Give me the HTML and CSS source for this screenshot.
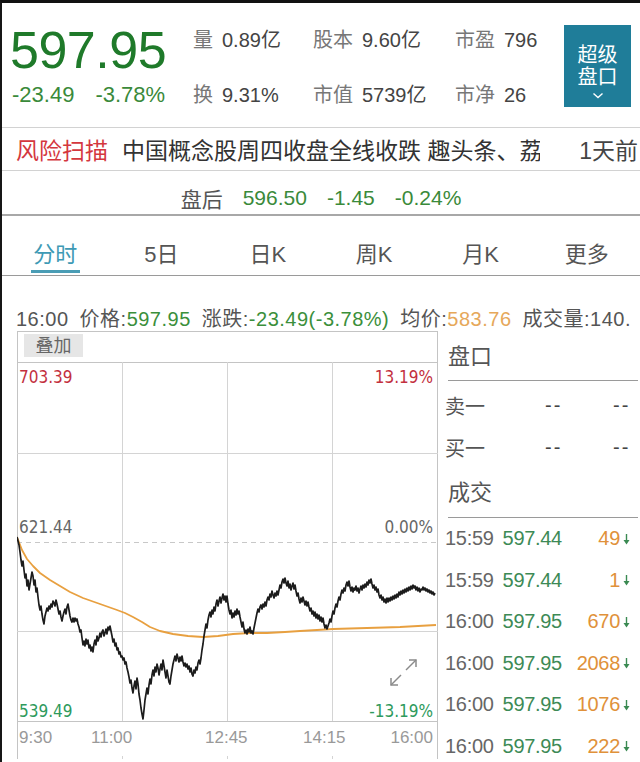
FILE: index.html
```html
<!DOCTYPE html>
<html lang="zh-CN">
<head>
<meta charset="utf-8">
<title>597.95</title>
<link rel="stylesheet" href="styles.css">
</head>
<body>
<div class="page">
  <header class="quote">
    <div class="price-block">
      <div class="price">597.95</div>
      <div class="chg"><span>-23.49</span><span>-3.78%</span></div>
    </div>
    <div class="stats">
      <div class="stat"><span class="k">量</span><span class="v">0.89亿</span></div>
      <div class="stat"><span class="k">股本</span><span class="v">9.60亿</span></div>
      <div class="stat"><span class="k">市盈</span><span class="v">796</span></div>
      <div class="stat"><span class="k">换</span><span class="v">9.31%</span></div>
      <div class="stat"><span class="k">市值</span><span class="v">5739亿</span></div>
      <div class="stat"><span class="k">市净</span><span class="v">26</span></div>
    </div>
    <div class="super">
      <span>超级</span>
      <span>盘口</span>
      <svg class="chev" width="12" height="7" viewBox="0 0 12 7"><polyline points="1.5,1.5 6,5.5 10.5,1.5" fill="none" stroke="#fff" stroke-width="1.4"/></svg>
    </div>
  </header>

  <div class="risk">
    <span class="tag">风险扫描</span>
    <span class="title">中国概念股周四收盘全线收跌 趣头条、荔枝</span>
    <span class="ago">1天前</span>
  </div>

  <div class="after">
    <span class="lbl">盘后</span>
    <span class="dn">596.50</span>
    <span class="dn">-1.45</span>
    <span class="dn">-0.24%</span>
  </div>

  <nav class="tabs">
    <div class="tab active">分时</div>
    <div class="tab">5日</div>
    <div class="tab">日K</div>
    <div class="tab">周K</div>
    <div class="tab">月K</div>
    <div class="tab">更多</div>
  </nav>

  <div class="info">
    <span class="grp">16:00</span><span class="grp">价格:<span class="dn">597.95</span></span><span class="grp">涨跌:<span class="dn">-23.49(-3.78%)</span></span><span class="grp">均价:<span class="avg">583.76</span></span><span class="grp last">成交量:140.</span>
  </div>

  <div class="main">
    <div class="chart">
      <svg width="421" height="428" viewBox="17 331 421 428">
        <g class="frame" fill="none">
          <line x1="17.5" y1="331" x2="17.5" y2="762"/>
          <line x1="437.5" y1="331" x2="437.5" y2="762"/>
          <line x1="17" y1="331.5" x2="438" y2="331.5"/>
          <line x1="17" y1="362.5" x2="438" y2="362.5"/>
          <line x1="17" y1="721.5" x2="438" y2="721.5"/>
        </g>
        <g class="grid" fill="none">
          <line x1="17" y1="453.5" x2="438" y2="453.5"/>
          <line x1="17" y1="631.5" x2="438" y2="631.5"/>
          <line x1="122.5" y1="362" x2="122.5" y2="721"/>
          <line x1="227.5" y1="362" x2="227.5" y2="721"/>
          <line x1="332.5" y1="362" x2="332.5" y2="721"/>
          <line x1="122.5" y1="756" x2="122.5" y2="762"/>
          <line x1="227.5" y1="756" x2="227.5" y2="762"/>
          <line x1="332.5" y1="756" x2="332.5" y2="762"/>
          <line class="dash" x1="17" y1="542.5" x2="438" y2="542.5"/>
        </g>
        <rect x="24" y="334" width="59" height="23" fill="#e6e6e6"/>
        <text class="overlay" x="53.5" y="352" text-anchor="middle">叠加</text>

        <polyline class="avgline" points="17,537 22,550 27,559 33,566 40,573 50,580 60,586 70,592 83,598 100,604 117,610 125,613 133,617 142,622 150,627 160,631 173,634 188,636 203,637 218,636 233,634 250,633 267,633 285,632 300,631 317,630 333,629 350,628.5 367,628 384,627.5 400,627 418,626 436,625"/>
        <polyline class="priceline" points="17,537 19,545 20,552 21,560 22,566 23,561 24,570 25,578 26,574 27,586 28,580 29,590 30,584 31,578 32,572 33,576 34,585 35,580 36,592 37,588 38,597 39,605 40,610 41,606 42,614 43,620 44,624 45,616 46,612 47,608 48,611 49,606 50,609 51,604 52,607 53,601 54,603 55,606 56,600 57,604 58,609 59,614 60,611 61,617 62,621 63,616 64,612 65,609 66,614 67,607 68,604 69,610 70,616 71,620 72,622 73,618 74,622 75,618 76,621 77,619 78,624 79,627 80,632 81,630 82,638 83,645 84,641 85,646 86,639 87,644 88,640 89,648 90,645 91,651 92,647 93,652 94,644 95,640 96,645 97,636 98,641 99,638 100,633 101,637 102,632 103,630 104,636 105,633 106,629 107,634 108,627 109,630 110,626 111,631 112,636 113,642 114,639 115,646 116,643 117,650 118,648 119,654 120,652 121,657 122,656 123,660 124,658 125,664 126,662 127,668 128,672 129,677 130,683 131,680 132,688 133,693 134,686 135,681 136,689 137,678 138,684 139,694 140,700 141,708 142,714 143,719 144,710 145,700 146,694 147,688 148,694 149,685 150,679 151,684 152,675 153,670 154,676 155,667 156,672 157,664 158,668 159,675 160,669 161,664 162,670 163,660 164,666 165,672 166,678 167,670 168,676 169,682 170,684 171,676 172,670 173,664 174,660 175,656 176,661 177,654 178,658 179,662 180,657 181,661 182,656 183,662 184,666 185,663 186,667 187,664 188,669 189,666 190,672 191,668 192,674 193,676 194,670 195,673 196,667 197,670 198,663 199,660 200,664 201,658 202,650 203,644 204,636 205,630 206,624 207,628 208,620 209,615 210,612 211,617 212,610 213,614 214,607 215,611 216,604 217,600 218,606 219,601 220,597 221,603 222,598 223,594 224,600 225,596 226,602 227,596 228,604 229,610 230,614 231,610 232,618 233,613 234,617 235,611 236,615 237,609 238,614 239,611 240,617 241,622 242,627 243,622 244,629 245,633 246,630 247,634 248,629 249,632 250,627 251,633 252,631 253,634 254,628 255,623 256,618 257,613 258,609 259,612 260,607 261,605 262,609 263,604 264,607 265,602 266,606 267,600 268,597 269,600 270,594 271,597 272,591 273,595 274,598 275,593 276,596 277,591 278,595 279,590 280,585 281,588 282,582 283,579 284,583 285,578 286,583 287,586 288,581 289,588 290,584 291,590 292,586 293,583 294,589 295,585 296,591 297,596 298,593 299,599 300,603 301,598 302,602 303,597 304,601 305,605 306,601 307,606 308,602 309,607 310,611 311,608 312,614 313,611 314,616 315,612 316,618 317,614 318,619 319,615 320,621 321,617 322,622 323,618 324,624 325,628 326,625 327,629 328,626 329,623 330,619 331,622 332,616 333,611 334,614 335,608 336,604 337,607 338,601 339,597 340,600 341,594 342,590 343,593 344,588 345,591 346,585 347,582 348,586 349,581 350,587 351,591 352,587 353,592 354,588 355,590 356,586 357,591 358,588 359,593 360,589 361,586 362,590 363,585 364,588 365,584 366,587 367,582 368,585 369,580 370,583 371,579 372,584 373,588 374,585 375,590 376,587 377,592 378,589 379,595 380,598 381,595 382,600 383,597 384,602 385,599 386,603 387,598 388,602 389,598 390,601 391,597 392,600 393,596 394,599 395,595 396,598 397,594 398,597 399,592 400,595 401,591 402,594 403,590 404,593 405,589 406,592 407,588 408,591 409,587 410,590 411,586 412,589 413,585 414,588 415,586 416,590 417,587 418,591 419,588 420,592 421,589 422,590 423,587 424,590 425,588 426,591 427,589 428,592 429,590 430,593 431,591 432,594 433,592 434,595 435,593"/>

        <text class="axis up" x="19" y="383">703.39</text>
        <text class="axis up" x="433" y="383" text-anchor="end">13.19%</text>
        <text class="axis flat" x="19" y="533">621.44</text>
        <text class="axis flat" x="433" y="533" text-anchor="end">0.00%</text>
        <text class="axis down" x="19" y="717">539.49</text>
        <text class="axis down" x="433" y="717" text-anchor="end">-13.19%</text>

        <g class="expand" fill="none">
          <line x1="391" y1="685" x2="401" y2="675"/>
          <polyline points="391,678 391,685 398,685"/>
          <line x1="406" y1="670" x2="416" y2="660"/>
          <polyline points="409,660 416,660 416,667"/>
        </g>

        <text class="time" x="19" y="743">9:30</text>
        <text class="time" x="91" y="743">11:00</text>
        <text class="time" x="205" y="743">12:45</text>
        <text class="time" x="303" y="743">14:15</text>
        <text class="time" x="433" y="743" text-anchor="end">16:00</text>
      </svg>
    </div>

    <aside class="book">
      <div class="book-h">盘口</div>
      <div class="level first"><span class="lbl">卖一</span><span class="d">--</span><span class="d">--</span></div>
      <div class="level"><span class="lbl">买一</span><span class="d">--</span><span class="d">--</span></div>
      <div class="book-h trades">成交</div>
      <div class="trade"><span class="t">15:59</span><span class="p">597.44</span><span class="vol">49</span><svg class="arr" width="7" height="12" viewBox="0 0 7 12"><line x1="3.5" y1="1" x2="3.5" y2="8" stroke="#3a8a52" stroke-width="1.4"/><polygon points="0.5,7 6.5,7 3.5,11.5" fill="#3a8a52"/></svg></div>
      <div class="trade"><span class="t">15:59</span><span class="p">597.44</span><span class="vol">1</span><svg class="arr" width="7" height="12" viewBox="0 0 7 12"><line x1="3.5" y1="1" x2="3.5" y2="8" stroke="#3a8a52" stroke-width="1.4"/><polygon points="0.5,7 6.5,7 3.5,11.5" fill="#3a8a52"/></svg></div>
      <div class="trade"><span class="t">16:00</span><span class="p">597.95</span><span class="vol">670</span><svg class="arr" width="7" height="12" viewBox="0 0 7 12"><line x1="3.5" y1="1" x2="3.5" y2="8" stroke="#3a8a52" stroke-width="1.4"/><polygon points="0.5,7 6.5,7 3.5,11.5" fill="#3a8a52"/></svg></div>
      <div class="trade"><span class="t">16:00</span><span class="p">597.95</span><span class="vol">2068</span><svg class="arr" width="7" height="12" viewBox="0 0 7 12"><line x1="3.5" y1="1" x2="3.5" y2="8" stroke="#3a8a52" stroke-width="1.4"/><polygon points="0.5,7 6.5,7 3.5,11.5" fill="#3a8a52"/></svg></div>
      <div class="trade"><span class="t">16:00</span><span class="p">597.95</span><span class="vol">1076</span><svg class="arr" width="7" height="12" viewBox="0 0 7 12"><line x1="3.5" y1="1" x2="3.5" y2="8" stroke="#3a8a52" stroke-width="1.4"/><polygon points="0.5,7 6.5,7 3.5,11.5" fill="#3a8a52"/></svg></div>
      <div class="trade"><span class="t">16:00</span><span class="p">597.95</span><span class="vol">222</span><svg class="arr" width="7" height="12" viewBox="0 0 7 12"><line x1="3.5" y1="1" x2="3.5" y2="8" stroke="#3a8a52" stroke-width="1.4"/><polygon points="0.5,7 6.5,7 3.5,11.5" fill="#3a8a52"/></svg></div>
    </aside>
  </div>
</div>
</body>
</html>
```

FILE: styles.css
```css
* { box-sizing: border-box; }
html, body { margin: 0; padding: 0; background: #fff; }
body {
  font-family: "Liberation Sans", "Noto Sans CJK SC", sans-serif;
  color: #333;
}
.page {
  width: 640px;
  height: 762px;
  border-top: 3px solid #111;
  border-left: 2px solid #161616;
  overflow: hidden;
}

/* header */
.quote {
  display: flex;
  height: 124px;
  padding-left: 8px;
}
.price-block { width: 183px; padding-top: 21px; }
.price {
  font-size: 52px;
  line-height: 52px;
  letter-spacing: -0.5px;
  color: #1f7a2a;
}
.chg {
  display: flex;
  gap: 21px;
  margin-top: 8px;
  padding-left: 2px;
  font-size: 22px;
  line-height: 22px;
  color: #3a8a3a;
}
.stats {
  display: grid;
  grid-template-columns: 120px 142px 109px;
  grid-template-rows: 24px 24px;
  row-gap: 31px;
  padding-top: 25px;
  font-size: 20px;
  line-height: 24px;
  white-space: nowrap;
}
.stat .k { color: #777; margin-right: 9px; }
.stat .v { color: #444; }
.super {
  width: 67px;
  height: 82px;
  margin-top: 22px;
  padding-top: 19px;
  background: #1f7d99;
  color: #fff;
  font-size: 20px;
  line-height: 22px;
  display: flex;
  flex-direction: column;
  align-items: center;
}
.chev { margin-top: 4px; }

/* risk row */
.risk {
  display: flex;
  align-items: center;
  height: 44px;
  border-top: 1px solid #d2d2d2;
  border-bottom: 1px solid #d2d2d2;
  padding-left: 14px;
  padding-right: 2px;
  font-size: 23px;
  white-space: nowrap;
}
.risk .tag { color: #d4373e; margin-right: 14px; flex: none; }
.risk .title { flex: 1; min-width: 0; overflow: hidden; color: #333; }
.risk .ago { margin-left: 39px; color: #444; flex: none; }

/* after hours */
.after {
  height: 45px;
  padding-top: 10px;
  display: flex;
  justify-content: center;
  align-items: center;
  gap: 20px;
  font-size: 21px;
  border-bottom: 2px solid #a8a8a8;
}
.after .lbl { color: #555; }
.after .dn { color: #3a8a3a; }

/* tabs */
.tabs {
  display: flex;
  height: 60px;
  border-bottom: 1px solid #9a9a9a;
}
.tab {
  flex: 1;
  display: flex;
  justify-content: center;
  align-items: center;
  padding-top: 13px;
  font-size: 22px;
  color: #555;
  position: relative;
}
.tab.active { color: #3e9ab5; }
.tab.active::after {
  content: "";
  position: absolute;
  left: 50%;
  bottom: 2px;
  width: 49px;
  height: 3px;
  margin-left: -24px;
  background: #4a9db5;
}

/* info line */
.info {
  height: 55px;
  padding: 31px 0 0 14px;
  line-height: 24px;
  font-size: 20px;
  letter-spacing: 0.5px;
  white-space: nowrap;
  overflow: hidden;
  color: #555;
}
.info .grp { margin-right: 11px; }
.info .grp.last { margin-right: 0; }
.info .dn { color: #3b8f3b; }
.info .avg { color: #e6a85a; }

/* main */
.main { display: flex; }
.chart { margin-left: 15px; width: 421px; flex: none; }
.chart svg { display: block; }
.frame line { stroke: #c4c4c4; stroke-width: 1; }
.grid line { stroke: #d4d4d4; stroke-width: 1; }
.grid .dash { stroke: #c8c8c8; stroke-dasharray: 5 4; }
.overlay {
  font-family: "Noto Sans CJK SC", sans-serif;
  font-size: 18px;
  fill: #666;
}
.priceline { fill: none; stroke: #1c1c1c; stroke-width: 1.7; stroke-linejoin: round; }
.avgline { fill: none; stroke: #e8a040; stroke-width: 1.8; stroke-linejoin: round; }
.axis {
  font-family: "DejaVu Sans Condensed", "DejaVu Sans", sans-serif;
  font-stretch: condensed;
  font-size: 17px;
}
.axis.up { fill: #c3303e; }
.axis.flat { fill: #666; }
.axis.down { fill: #2e9a5c; }
.expand line, .expand polyline { stroke: #8a8a8a; stroke-width: 1.5; }
.time {
  font-family: "Liberation Sans", "Noto Sans CJK SC", sans-serif;
  font-size: 17px;
  fill: #999;
}

/* order book */
.book { flex: 1; min-width: 0; }
.book-h {
  margin-left: 10px;
  margin-right: 2px;
  padding: 14px 0 11px;
  line-height: 24px;
  font-size: 22px;
  color: #555;
  border-bottom: 1px solid #9a9a9a;
}
.book-h.trades { padding: 13px 0 12px; }
.level {
  display: flex;
  align-items: center;
  height: 42px;
  padding-left: 7px;
  font-size: 20px;
  color: #555;
}
.level.first { margin-top: 3px; }
.level .lbl { width: 100px; flex: none; }
.level .d { width: 68px; flex: none; letter-spacing: 2px; color: #444; }
.level .d:last-child { width: auto; }
.trade {
  display: flex;
  align-items: center;
  height: 41.5px;
  padding-left: 7px;
  padding-right: 10px;
  font-size: 20px;
  letter-spacing: -0.3px;
  white-space: nowrap;
}
.trade .t { color: #666; }
.trade .p { color: #3d8a56; margin-left: 9px; }
.trade .vol { margin-left: auto; color: #e0913a; }
.trade .arr { margin-left: 3px; flex: none; }
```
